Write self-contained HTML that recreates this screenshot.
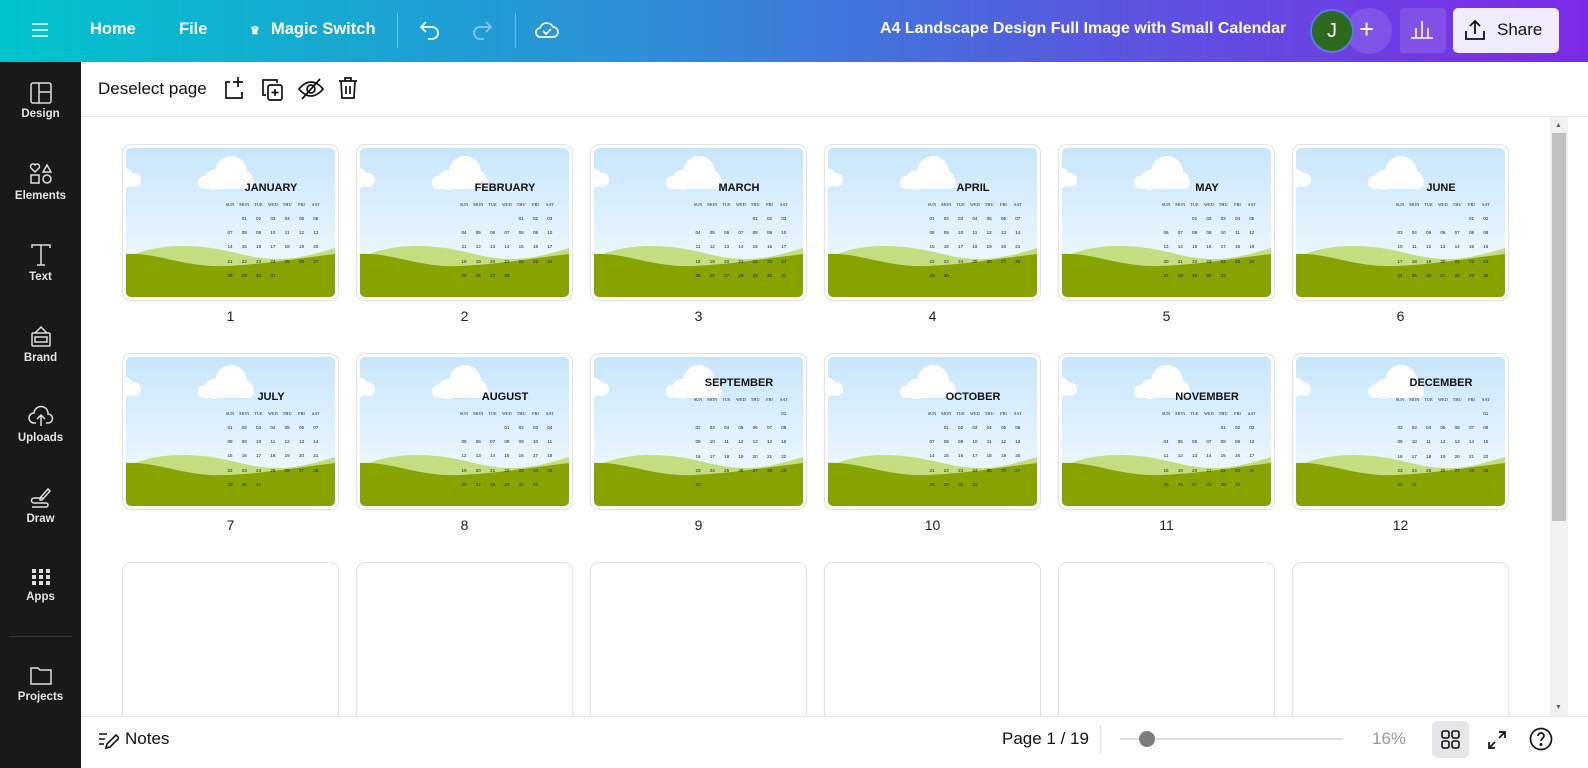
<!DOCTYPE html>
<html><head><meta charset="utf-8"><style>
*{box-sizing:border-box;margin:0;padding:0}
body{width:1588px;height:768px;overflow:hidden;font-family:"Liberation Sans",sans-serif;background:#fff;position:relative}
.top{position:absolute;left:0;top:0;width:1588px;height:62px;background:linear-gradient(90deg,#00c4cc 0%,#2d8fd8 40%,#5a56e0 70%,#7d2ae8 100%);color:#fff}
.top .t{position:absolute;top:20px;font-size:16.5px;font-weight:bold}
.side{position:absolute;left:0;top:62px;width:81px;height:706px;background:#18191b;color:#e5e5e5}
.si{position:absolute;left:0;width:81px;text-align:center;font-size:11.5px;font-weight:bold}
.si svg{display:block;margin:0 auto 4px}
.tb{position:absolute;left:81px;top:62px;right:0;height:55px;border-bottom:1px solid #e6e6e6;background:#fff}
.card{position:absolute;width:215px;height:155px;border-radius:8px;background:#fff;box-shadow:0 0 0 1px #e3e3e6,0 1px 3px rgba(0,0,0,.08)}
.img{position:absolute;left:3px;top:3px;width:209px;height:149px;border-radius:5px;overflow:hidden;background:linear-gradient(#c8e6fb,#eef8fe 80%)}
.num{position:absolute;width:215px;text-align:center;font-size:14px;color:#222}
.mt{position:absolute;font-size:11px;font-weight:bold;color:#111;width:120px;text-align:center}
.cal{position:absolute;font-size:4.3px;color:#222;font-family:"Liberation Serif",serif}
.cal span{position:absolute;width:14px;text-align:center}
.bot{position:absolute;left:81px;top:716px;right:0;height:52px;border-top:1px solid #e6e6e6;background:#fff}
</style></head><body>
<div class="top">
<svg style="position:absolute;left:31px;top:21px" width="18" height="18" viewBox="0 0 18 18" stroke="#fff" stroke-width="1.6"><path d="M1 3h16M1 9h16M1 15h16"/></svg>
<div class="t" style="left:90px">Home</div>
<div class="t" style="left:179px">File</div>
<div class="t" style="left:250px;font-size:11px;top:24px">♛</div>
<div class="t" style="left:271px">Magic Switch</div>
<div style="position:absolute;left:397px;top:13px;width:1px;height:35px;background:rgba(255,255,255,.35)"></div>
<svg style="position:absolute;left:418px;top:18px" width="24" height="24" viewBox="0 0 24 24" fill="none" stroke="#fff" stroke-width="1.8"><path d="M8 4L3 9l5 5M3 9h11a6 6 0 010 12h-4"/></svg>
<svg style="position:absolute;left:470px;top:18px" width="24" height="24" viewBox="0 0 24 24" fill="none" stroke="rgba(255,255,255,.45)" stroke-width="1.8"><path d="M16 4l5 5-5 5M21 9H10a6 6 0 000 12h4"/></svg>
<div style="position:absolute;left:515px;top:13px;width:1px;height:35px;background:rgba(255,255,255,.35)"></div>
<svg style="position:absolute;left:534px;top:17px" width="26" height="26" viewBox="0 0 26 26" fill="none" stroke="#fff" stroke-width="1.7"><path d="M7 20h12a5 5 0 000-10 7 7 0 00-13 1 4.5 4.5 0 001 9z"/><path d="M9 14l3 3 5-5"/></svg>
<div class="t" style="left:880px;font-size:16px">A4 Landscape Design Full Image with Small Calendar</div>
<div style="position:absolute;left:1346px;top:8px;width:46px;height:46px;border-radius:50%;background:rgba(255,255,255,.12)"></div>
<div style="position:absolute;left:1359px;top:14px;font-size:26px;font-weight:300">+</div>
<div style="position:absolute;left:1310px;top:9px;width:44px;height:44px;border-radius:50%;background:#2d6a1f;border:2px solid #5a7be8;text-align:center;line-height:40px;font-size:20px">J</div>
<div style="position:absolute;left:1400px;top:8px;width:46px;height:45px;border-radius:4px;background:rgba(255,255,255,.12)"></div>
<svg style="position:absolute;left:1410px;top:18px" width="24" height="22" viewBox="0 0 24 22" stroke="#fff" stroke-width="1.6"><path d="M1 20h22M6 20V10M12 20V3M18 20V10"/></svg>
<div style="position:absolute;left:1453px;top:8px;width:106px;height:45px;border-radius:5px;background:#f0ebfd;color:#111;font-weight:normal;font-size:17px"><svg style="position:absolute;left:11px;top:11px" width="22" height="22" viewBox="0 0 22 22" fill="none" stroke="#111" stroke-width="1.8"><path d="M2 12v8h18v-8M11 15V2M6 7l5-5 5 5"/></svg><span style="position:absolute;left:44px;top:12px">Share</span></div>
</div>
<div class="side">
<div class="si" style="top:20px"><svg width="22" height="22" viewBox="0 0 22 22" fill="none" stroke="#ddd" stroke-width="1.5"><rect x="1" y="1" width="20" height="20" rx="2"/><path d="M9 1v20M9 10h12"/></svg>Design</div>
<div class="si" style="top:100px"><svg width="24" height="24" viewBox="0 0 24 24" fill="none" stroke="#ddd" stroke-width="1.5"><path d="M6 10L2 6a2.3 2.3 0 014-3 2.3 2.3 0 014 3zM14 10l4-7 4 7z"/><rect x="2" y="13" width="8" height="8"/><circle cx="18" cy="17" r="4"/></svg>Elements</div>
<div class="si" style="top:181px"><svg width="22" height="24" viewBox="0 0 22 24" fill="none" stroke="#ddd" stroke-width="1.5"><path d="M2 5V2h18v3M11 2v20M7 22h8"/></svg>Text</div>
<div class="si" style="top:262px"><svg width="22" height="24" viewBox="0 0 22 24" fill="none" stroke="#ddd" stroke-width="1.5"><rect x="2" y="9" width="18" height="13" rx="1"/><path d="M5 9l6-6 6 6"/><rect x="5" y="13" width="12" height="5"/></svg>Brand</div>
<div class="si" style="top:342px"><svg width="26" height="24" viewBox="0 0 26 24" fill="none" stroke="#ddd" stroke-width="1.5"><path d="M8 19H6a5 5 0 010-10 7 7 0 0114 1 4.5 4.5 0 010 9h-2M13 22V12M9 15l4-4 4 4"/></svg>Uploads</div>
<div class="si" style="top:423px"><svg width="24" height="24" viewBox="0 0 24 24" fill="none" stroke="#ddd" stroke-width="1.5"><path d="M11 13l8-9 2 2-8 9h-2zM14 13H5a2.5 2.5 0 000 5h12a2 2 0 010 4H3"/></svg>Draw</div>
<div class="si" style="top:505px"><svg width="20" height="20" viewBox="0 0 20 20" fill="#ddd"><rect x="1" y="2" width="4" height="4"/><rect x="8" y="2" width="4" height="4"/><rect x="15" y="2" width="4" height="4"/><rect x="1" y="8" width="4" height="4"/><rect x="8" y="8" width="4" height="4"/><rect x="15" y="8" width="4" height="4"/><rect x="1" y="14" width="4" height="4"/><rect x="8" y="14" width="4" height="4"/><rect x="15" y="14" width="4" height="4"/></svg>Apps</div>
<div style="position:absolute;left:9px;top:574px;width:63px;height:1px;background:#3a3b3d"></div>
<div class="si" style="top:603px"><svg width="24" height="22" viewBox="0 0 24 22" fill="none" stroke="#ddd" stroke-width="1.5"><path d="M2 3h7l2 2h11v14H2z"/></svg>Projects</div>
</div>
<div class="tb">
<div style="position:absolute;left:17px;top:17px;font-size:17px;color:#111">Deselect page</div>
<svg style="position:absolute;left:142px;top:14px" width="24" height="24" viewBox="0 0 24 24" fill="none" stroke="#111" stroke-width="1.7"><path d="M7 6H3v16h16v-6M15 1v10M10 6h10"/></svg>
<svg style="position:absolute;left:180px;top:16px" width="24" height="24" viewBox="0 0 24 24" fill="none" stroke="#111" stroke-width="1.7"><path d="M5 17H2V2h14v3"/><rect x="7" y="7" width="14" height="15" rx="2"/><path d="M14 11v7M10.5 14.5h7"/></svg>
<svg style="position:absolute;left:216px;top:15px" width="28" height="24" viewBox="0 0 28 24" fill="none" stroke="#111" stroke-width="1.7"><path d="M2 12s5-7 12-7 12 7 12 7-5 7-12 7S2 12 2 12z"/><circle cx="14" cy="12" r="4"/><path d="M5 22L23 2"/></svg>
<svg style="position:absolute;left:256px;top:14px" width="22" height="24" viewBox="0 0 22 24" fill="none" stroke="#111" stroke-width="1.7"><path d="M2 5h18M8 5V2h6v3M4 5l1 17h12l1-17M9 10v8M13 10v8"/></svg>
</div>
<div id="grid"></div>
<div style="position:absolute;left:1550px;top:117px;width:18px;height:599px;background:#f1f1f1"></div>
<div style="position:absolute;left:1552px;top:133px;width:14px;height:388px;background:#c1c1c1"></div>
<div style="position:absolute;left:1555px;top:122px;font-size:7px;color:#666">▲</div>
<div style="position:absolute;left:1555px;top:704px;font-size:7px;color:#666">▼</div>
<div class="bot">
<svg style="position:absolute;left:16px;top:12px" width="22" height="22" viewBox="0 0 22 22" fill="none" stroke="#111" stroke-width="1.6"><path d="M2 5h8M2 10h6M2 15h5M9 19l1-4 9-9 3 3-9 9z"/></svg>
<div style="position:absolute;left:44px;top:12px;font-size:17px;color:#111">Notes</div>
<div style="position:absolute;left:921px;top:12px;font-size:17px;color:#111">Page 1 / 19</div>
<div style="position:absolute;left:1019px;top:8px;width:1px;height:28px;background:#e0e0e0"></div>
<div style="position:absolute;left:1039px;top:21px;width:223px;height:2px;background:#e0e0e0"></div>
<div style="position:absolute;left:1058px;top:14px;width:16px;height:16px;border-radius:50%;background:#7a7d80"></div>
<div style="position:absolute;left:1291px;top:12px;font-size:17px;color:#999">16%</div>
<div style="position:absolute;left:1351px;top:4px;width:37px;height:37px;border-radius:5px;background:#e4e6ea"></div>
<svg style="position:absolute;left:1360px;top:13px" width="19" height="19" viewBox="0 0 19 19" fill="none" stroke="#111" stroke-width="1.6"><rect x="1" y="1" width="7" height="7" rx="2"/><rect x="11" y="1" width="7" height="7" rx="2"/><rect x="1" y="11" width="7" height="7" rx="2"/><rect x="11" y="11" width="7" height="7" rx="2"/></svg>
<svg style="position:absolute;left:1405px;top:12px" width="22" height="22" viewBox="0 0 22 22" fill="none" stroke="#111" stroke-width="1.7"><path d="M13 3h6v6M19 3l-6 6M9 19H3v-6M3 19l6-6"/></svg>
<svg style="position:absolute;left:1448px;top:10px" width="24" height="24" viewBox="0 0 24 24" fill="none" stroke="#111" stroke-width="1.7"><circle cx="12" cy="12" r="10.5"/><path d="M9 9a3 3 0 116 0c0 2-3 2.5-3 5"/><circle cx="12" cy="17.5" r=".6" fill="#111"/></svg>
</div>
<script>
var months=[["JANUARY",1,31],["FEBRUARY",4,28],["MARCH",4,31],["APRIL",0,30],["MAY",2,31],["JUNE",5,30],["JULY",0,31],["AUGUST",3,31],["SEPTEMBER",6,30],["OCTOBER",1,31],["NOVEMBER",4,30],["DECEMBER",6,31]];
var xs=[123,357,591,825,1059,1293],ys=[145,354,563],h="";
var days=["SUN","MON","TUE","WED","THU","FRI","SAT"];
for(var r=0;r<3;r++)for(var c=0;c<6;c++){
 var x=xs[c],y=ys[r];
 h+='<div class="card" style="left:'+x+'px;top:'+y+'px'+(r==2?';height:170px':'')+'">';
 if(r<2){
  var m=months[r*6+c],rows=Math.ceil((m[1]+m[2])/7),off=rows>5?-14:0;
  h+='<div class="img"><svg style="position:absolute;left:0;top:0" width="209" height="149" viewBox="0 0 209 149">'+
  '<g fill="#fff"><circle cx="-2" cy="30" r="10"/><circle cx="8" cy="32" r="7"/><rect x="-5" y="28" width="20" height="10" rx="5"/>'+
  '<circle cx="105" cy="24" r="16"/><circle cx="88" cy="32" r="10"/><circle cx="118" cy="32" r="9"/><rect x="72" y="28" width="56" height="13" rx="6"/></g>'+
  '<path d="M0 110 C30 95 70 95 110 105 S170 112 209 100 V149 H0Z" fill="#c2de81"/>'+
  '<path d="M0 106 C30 104 60 120 100 118 S160 112 209 106 V149 H0Z" fill="#86a300"/></svg>';
  h+='<div class="mt" style="left:85px;top:'+(34+off)+'px">'+m[0]+'</div><div class="cal" style="left:97px;top:'+(54+off)+'px">';
  for(var d=0;d<7;d++)h+='<span style="left:'+(d*14.3)+'px;top:0">'+days[d]+'</span>';
  for(var i=1;i<=m[2];i++){var p=m[1]+i-1;h+='<span style="font-family:Liberation Sans;font-size:4.6px;left:'+((p%7)*14.3)+'px;top:'+(14+Math.floor(p/7)*14.2)+'px">'+(i<10?"0"+i:i)+'</span>';}
  h+='</div></div>';
 }
 h+='</div>';
 if(r<2)h+='<div class="num" style="left:'+x+'px;top:'+(y+163)+'px">'+(r*6+c+1)+'</div>';
}
document.getElementById('grid').innerHTML=h;
</script>
</body></html>
